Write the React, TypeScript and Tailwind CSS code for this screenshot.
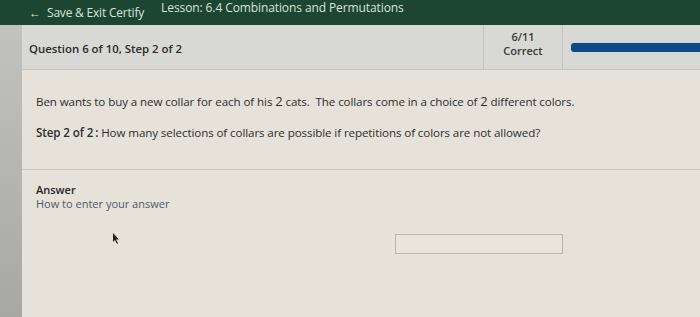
export default function App() {
  return (
    <div className="w-[700px] h-[317px] overflow-hidden bg-[#e6e2da] font-['Open_Sans',sans-serif] flex flex-col">
      {/* top bar */}
      <div className="h-[25px] bg-[#1c4631] flex items-center text-[12px] text-[#d9e3dc] shrink-0">
        <span className="ml-[29px] mr-[6px] text-[12px] leading-none">&larr;</span>
        <span className="tracking-[-0.2px]">Save &amp; Exit Certify</span>
        <span className="ml-[17px] tracking-[-0.1px] -mt-[9px]">Lesson: 6.4 Combinations and Permutations</span>
      </div>

      <div className="flex flex-1">
        {/* left strip */}
        <div className="w-[22px] bg-gradient-to-b from-[#c2c3bf] to-[#a7a8a3] shrink-0" />

        <div className="flex-1 flex flex-col">
          {/* question header */}
          <div className="h-[45px] bg-[#d8d9d5] border-b border-[#c4c4bf] flex items-stretch">
            <div className="flex-1 flex items-center pl-[7px] pt-[4px] text-[11.4px] font-semibold text-[#2a2a2a]">
              Question 6 of 10, Step 2 of 2
            </div>
            <div className="w-[80px] border-x border-[#c3c4bf] flex flex-col items-center justify-center text-[11px] font-semibold text-[#3a3a3a] leading-[14px] pb-[6px]">
              <span>6/11</span>
              <span>Correct</span>
            </div>
            <div className="w-[137px] flex items-center pl-[8px]">
              <div className="h-[9px] w-full bg-[#0f4a86] rounded-l-[3px]" />
            </div>
          </div>

          {/* question body */}
          <div className="h-[100px] border-b border-[#c9c6bf] pl-[14px] pt-[22px] text-[11.6px] text-[#2e2e2e] tracking-[-0.1px]">
            <p>
              Ben wants to buy a new collar for each of his <span className="text-[13px]">2</span> cats.&nbsp; The collars come in a choice of <span className="text-[13px]">2</span> different colors.
            </p>
            <p className="mt-[12px]">
              <span className="font-semibold">Step 2 of 2&thinsp;:</span> How many selections of collars are possible if repetitions of colors are not allowed?
            </p>
          </div>

          {/* answer */}
          <div className="flex-1 pl-[14px] pt-[13px] relative">
            <div className="text-[11px] font-semibold text-[#262626] leading-[14px]">Answer</div>
            <div className="text-[11px] text-[#4b5a6c] leading-[14px]">How to enter your answer</div>
            <div className="ml-[359px] mt-[23px] w-[168px] h-[20px] border border-[#b9b6b0] bg-[#e8e4dc]" />
            <svg className="absolute left-[90px] top-[63px]" width="8" height="12" viewBox="0 0 8 12">
              <path d="M1 0 L1 9 L3 7 L5 11 L6 10 L4 6.5 L7 6.5 Z" fill="#222" />
            </svg>
          </div>
        </div>
      </div>
    </div>
  );
}
